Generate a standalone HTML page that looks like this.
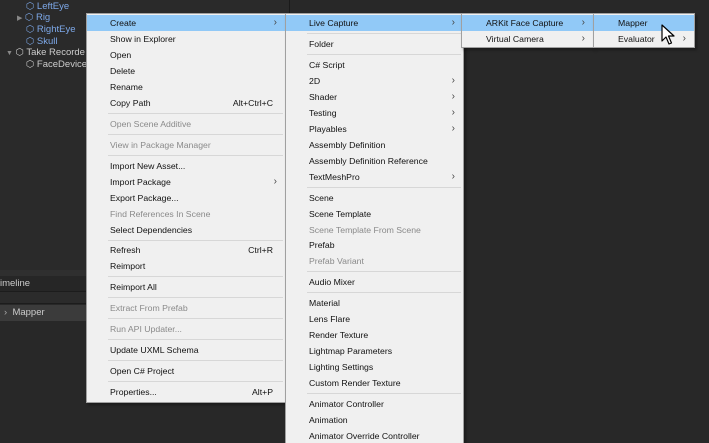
<!DOCTYPE html><html><head><style>
html,body{margin:0;width:709px;height:443px;overflow:hidden}
body{background:#282828;position:relative;font-family:"Liberation Sans","DejaVu Sans",sans-serif;font-size:8.7px}
.a{position:absolute}
.m{position:absolute;background:#f0f0f0;border:1px solid #a0a0a0;box-shadow:2px 2px 3px rgba(0,0,0,.35)}
.i{position:absolute;left:0;right:0;height:16px;line-height:16px;color:#111;white-space:nowrap}
.i.d{color:#8a8a8a}
.i.h{background:#91c9f7}
.s{position:absolute;height:1px;background:#d7d7d7}
.k{position:absolute;right:12px;top:0}
.r{position:absolute;right:8px;top:0;color:#444;font-size:10px}
.t{position:absolute;font-size:9.5px}
</style></head><body>
<div class="a" style="left:0;top:0;width:290px;height:270px;background:#2a2a2a"></div>
<div class="a" style="left:289px;top:0;width:1px;height:20px;background:#1a1a1a"></div>
<div class="a" style="left:0;top:270px;width:290px;height:6px;background:#2f2f2f"></div>
<div class="a" style="left:0;top:276px;width:290px;height:15px;background:#262626;border-bottom:1px solid #1c1c1c"></div>
<div class="t" style="left:0;top:278px;color:#ccc">imeline</div>
<div class="a" style="left:0;top:292px;width:290px;height:11px;background:#2b2b2b;border-bottom:1px solid #1c1c1c"></div>
<div class="a" style="left:0;top:305px;width:290px;height:16px;background:#3b3b3b"></div>
<div class="t" style="left:4px;top:307px;color:#aaa">›&nbsp; <span style="color:#ccc">Mapper</span></div>
<div class="t" style="left:26px;top:1px;color:#7da8e8">⬡ LeftEye</div>
<div class="t" style="left:17px;top:12px;color:#7da8e8"><span style="color:#888;font-size:7px">▶</span> ⬡ Rig</div>
<div class="t" style="left:26px;top:24px;color:#7da8e8">⬡ RightEye</div>
<div class="t" style="left:26px;top:36px;color:#7da8e8">⬡ Skull</div>
<div class="t" style="left:6px;top:47px;color:#ccc"><span style="color:#888;font-size:7px">▼</span> ⬡ Take Recorde</div>
<div class="t" style="left:26px;top:59px;color:#ccc">⬡ FaceDevice</div>

<div class="m" style="left:86px;top:13px;width:198px;height:388px">
<div class="i h" style="top:1px"><span style="margin-left:23px">Create</span><span class="r">›</span></div>
<div class="i" style="top:17px"><span style="margin-left:23px">Show in Explorer</span></div>
<div class="i" style="top:33px"><span style="margin-left:23px">Open</span></div>
<div class="i" style="top:49px"><span style="margin-left:23px">Delete</span></div>
<div class="i" style="top:65px"><span style="margin-left:23px">Rename</span></div>
<div class="i" style="top:81px"><span style="margin-left:23px">Copy Path</span><span class="k">Alt+Ctrl+C</span></div>
<div class="s" style="left:21px;right:2px;top:99px"></div>
<div class="i d" style="top:102px"><span style="margin-left:23px">Open Scene Additive</span></div>
<div class="s" style="left:21px;right:2px;top:120px"></div>
<div class="i d" style="top:123px"><span style="margin-left:23px">View in Package Manager</span></div>
<div class="s" style="left:21px;right:2px;top:141px"></div>
<div class="i" style="top:144px"><span style="margin-left:23px">Import New Asset...</span></div>
<div class="i" style="top:160px"><span style="margin-left:23px">Import Package</span><span class="r">›</span></div>
<div class="i" style="top:176px"><span style="margin-left:23px">Export Package...</span></div>
<div class="i d" style="top:192px"><span style="margin-left:23px">Find References In Scene</span></div>
<div class="i" style="top:208px"><span style="margin-left:23px">Select Dependencies</span></div>
<div class="s" style="left:21px;right:2px;top:226px"></div>
<div class="i" style="top:228px"><span style="margin-left:23px">Refresh</span><span class="k">Ctrl+R</span></div>
<div class="i" style="top:244px"><span style="margin-left:23px">Reimport</span></div>
<div class="s" style="left:21px;right:2px;top:262px"></div>
<div class="i" style="top:265px"><span style="margin-left:23px">Reimport All</span></div>
<div class="s" style="left:21px;right:2px;top:283px"></div>
<div class="i d" style="top:286px"><span style="margin-left:23px">Extract From Prefab</span></div>
<div class="s" style="left:21px;right:2px;top:304px"></div>
<div class="i d" style="top:307px"><span style="margin-left:23px">Run API Updater...</span></div>
<div class="s" style="left:21px;right:2px;top:325px"></div>
<div class="i" style="top:328px"><span style="margin-left:23px">Update UXML Schema</span></div>
<div class="s" style="left:21px;right:2px;top:346px"></div>
<div class="i" style="top:349px"><span style="margin-left:23px">Open C# Project</span></div>
<div class="s" style="left:21px;right:2px;top:367px"></div>
<div class="i" style="top:370px"><span style="margin-left:23px">Properties...</span><span class="k">Alt+P</span></div>
</div>

<div class="m" style="left:285px;top:13px;width:177px;height:440px">
<div class="i h" style="top:1px"><span style="margin-left:23px">Live Capture</span><span class="r">›</span></div>
<div class="s" style="left:21px;right:2px;top:19px"></div>
<div class="i" style="top:22px"><span style="margin-left:23px">Folder</span></div>
<div class="s" style="left:21px;right:2px;top:40px"></div>
<div class="i" style="top:43px"><span style="margin-left:23px">C# Script</span></div>
<div class="i" style="top:59px"><span style="margin-left:23px">2D</span><span class="r">›</span></div>
<div class="i" style="top:75px"><span style="margin-left:23px">Shader</span><span class="r">›</span></div>
<div class="i" style="top:91px"><span style="margin-left:23px">Testing</span><span class="r">›</span></div>
<div class="i" style="top:107px"><span style="margin-left:23px">Playables</span><span class="r">›</span></div>
<div class="i" style="top:123px"><span style="margin-left:23px">Assembly Definition</span></div>
<div class="i" style="top:139px"><span style="margin-left:23px">Assembly Definition Reference</span></div>
<div class="i" style="top:155px"><span style="margin-left:23px">TextMeshPro</span><span class="r">›</span></div>
<div class="s" style="left:21px;right:2px;top:173px"></div>
<div class="i" style="top:176px"><span style="margin-left:23px">Scene</span></div>
<div class="i" style="top:192px"><span style="margin-left:23px">Scene Template</span></div>
<div class="i d" style="top:208px"><span style="margin-left:23px">Scene Template From Scene</span></div>
<div class="i" style="top:223px"><span style="margin-left:23px">Prefab</span></div>
<div class="i d" style="top:239px"><span style="margin-left:23px">Prefab Variant</span></div>
<div class="s" style="left:21px;right:2px;top:257px"></div>
<div class="i" style="top:260px"><span style="margin-left:23px">Audio Mixer</span></div>
<div class="s" style="left:21px;right:2px;top:278px"></div>
<div class="i" style="top:281px"><span style="margin-left:23px">Material</span></div>
<div class="i" style="top:297px"><span style="margin-left:23px">Lens Flare</span></div>
<div class="i" style="top:313px"><span style="margin-left:23px">Render Texture</span></div>
<div class="i" style="top:329px"><span style="margin-left:23px">Lightmap Parameters</span></div>
<div class="i" style="top:345px"><span style="margin-left:23px">Lighting Settings</span></div>
<div class="i" style="top:361px"><span style="margin-left:23px">Custom Render Texture</span></div>
<div class="s" style="left:21px;right:2px;top:379px"></div>
<div class="i" style="top:382px"><span style="margin-left:23px">Animator Controller</span></div>
<div class="i" style="top:398px"><span style="margin-left:23px">Animation</span></div>
<div class="i" style="top:414px"><span style="margin-left:23px">Animator Override Controller</span></div>
</div>

<div class="m" style="left:461px;top:13px;width:131px;height:33px">
<div class="i h" style="top:1px"><span style="margin-left:24px">ARKit Face Capture</span><span class="r">›</span></div>
<div class="i" style="top:17px"><span style="margin-left:24px">Virtual Camera</span><span class="r">›</span></div>
</div>
<div class="m" style="left:593px;top:13px;width:100px;height:33px">
<div class="i h" style="top:1px"><span style="margin-left:24px">Mapper</span></div>
<div class="i" style="top:17px"><span style="margin-left:24px">Evaluator</span><span class="r">›</span></div>
</div>
<svg class="a" style="left:661px;top:24px" width="16" height="22" viewBox="0 0 16 22"><path d="M1 1 L1 17 L5 13 L8 20 L10.5 19 L7.5 12 L13 12 Z" fill="#fff" stroke="#000" stroke-width="1.2" stroke-linejoin="round"/></svg>
</body></html>
